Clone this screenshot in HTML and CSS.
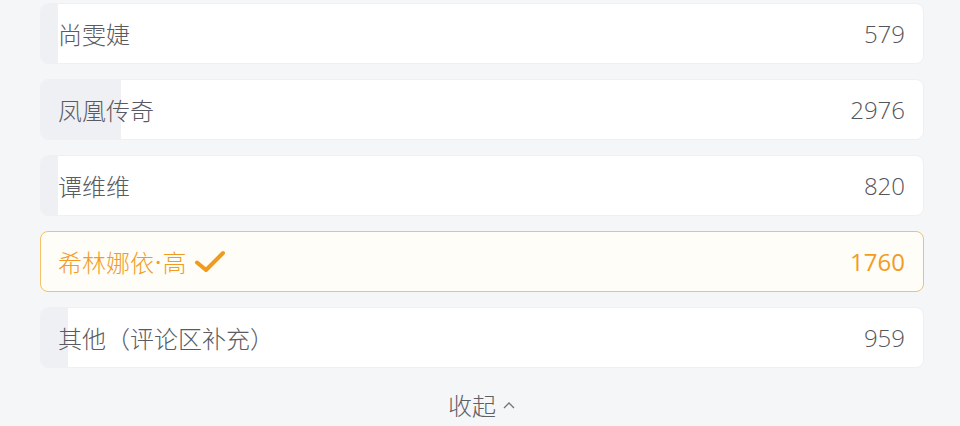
FILE: index.html
```html
<!DOCTYPE html>
<html lang="zh">
<head>
<meta charset="utf-8">
<link rel="stylesheet" href="styles.css">
</head>
<body>
<div class="list">
  <div class="opt"><div class="fill" style="width:17px"></div><span class="name">尚雯婕</span><span class="num">579</span></div>
  <div class="opt"><div class="fill" style="width:80px"></div><span class="name">凤凰传奇</span><span class="num">2976</span></div>
  <div class="opt"><div class="fill" style="width:17px"></div><span class="name">谭维维</span><span class="num">820</span></div>
  <div class="opt sel"><span class="name">希林娜依<span class="dot">·</span>高<svg class="check" width="32" height="26" viewBox="0 0 32 26"><path d="M3 13.5 L12 21 L29 4" fill="none" stroke="#f39a1c" stroke-width="4" stroke-linecap="round" stroke-linejoin="round"/></svg></span><span class="num">1760</span></div>
  <div class="opt"><div class="fill" style="width:27px"></div><span class="name">其他（评论区补充）</span><span class="num">959</span></div>
</div>
<div class="fold">收起<svg class="caret" width="14" height="10" viewBox="0 0 14 10"><path d="M2 8 L7 3 L12 8" fill="none" stroke="#777" stroke-width="1.4"/></svg></div>
</body>
</html>
```
FILE: styles.css
```css
html, body {
  margin: 0;
  background: #f5f6f8;
  font-family: "Noto Sans CJK SC", "Noto Sans", sans-serif;
}
.list {
  padding: 3px 36px 0 40px;
  display: flex;
  flex-direction: column;
  gap: 15px;
}
.opt {
  position: relative;
  height: 61px;
  box-sizing: border-box;
  background: #ffffff;
  border-radius: 8px;
  border: 1px solid #eef0f3;
  display: flex;
  align-items: center;
  justify-content: space-between;
  padding: 0 18px 0 17px;
  overflow: hidden;
  color: #5a5a62;
  font-size: 24px;
  font-weight: 300;
}
.fill {
  position: absolute;
  left: 0;
  top: 0;
  bottom: 0;
  background: #eff0f3;
}
.name, .num {
  position: relative;
  display: flex;
  align-items: center;
}
.dot {
  font-family: "Noto Sans", sans-serif;
  font-weight: 400;
  margin: 0 1px;
}
.num {
  font-family: "Open Sans", "Noto Sans", sans-serif;
  font-weight: 300;
  font-size: 24px;
  color: #55555c;
}
.sel {
  background: #fffdf8;
  border: 1.5px solid #f3c16a;
  color: #f29c1f;
}
.sel .num {
  color: #f29c1f;
  font-weight: 400;
}
.check {
  margin-left: 8px;
}
.fold {
  display: flex;
  justify-content: center;
  align-items: center;
  margin-top: 19px;
  font-size: 24px;
  font-weight: 300;
  color: #5f5f66;
  padding-left: 4px;
}
.caret {
  margin-left: 6px;
}
```
